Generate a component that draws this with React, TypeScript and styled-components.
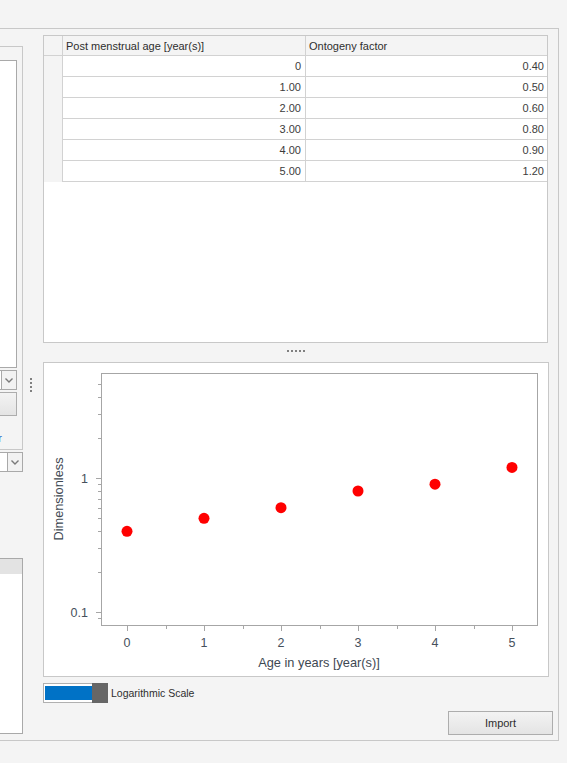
import React from 'react';
import styled, { createGlobalStyle } from 'styled-components';

const GlobalStyle = createGlobalStyle`
  html, body { margin: 0; padding: 0; background: #f4f4f4; }
  body { font-family: "Liberation Sans", Arial, sans-serif; font-size: 11px; color: #333; }
  * { box-sizing: border-box; }
`;

const Viewport = styled.div`
  width: 567px;
  height: 763px;
  overflow: hidden;
  padding-top: 28px;
  background: #f4f4f4;
`;

const Frame = styled.div`
  margin-left: -40px;
  width: 599px;
  height: 713px;
  border: 1px solid #c8c8c8;
  display: flex;
`;

/* ---------- left column ---------- */
const LeftColumn = styled.div`
  width: 62px;
  flex: none;
  display: flex;
  flex-direction: column;
  padding-top: 17px;
`;

const GroupPanel = styled.div`
  height: 404px;
  border: 1px solid #c8c8c8;
  padding: 13px 5px 0 0;
  display: flex;
  flex-direction: column;
  gap: 2px;
  overflow: hidden;
`;

const ListBox = styled.div`
  height: 308px;
  flex: none;
  background: #fff;
  border: 1px solid #a9a9a9;
`;

const Combo = styled.div<{ $top?: number }>`
  height: 20px;
  flex: none;
  margin-top: ${(p) => p.$top ?? 0}px;
  display: flex;
  background: #fff;
  border: 1px solid #a9a9a9;
`;

const ComboField = styled.div`
  flex: 1;
`;

const ArrowButton = styled.div`
  width: 15px;
  border-left: 1px solid #a9a9a9;
  background: #f2f2f2;
  display: flex;
  align-items: center;
  justify-content: center;
`;

const PlainButton = styled.button`
  height: 24px;
  flex: none;
  border: 1px solid #adadad;
  background: linear-gradient(#f3f3f3, #e4e4e4);
  font-family: "Liberation Sans", Arial, sans-serif;
  font-size: 11px;
  color: #222;
  padding: 0;
`;

const LinkText = styled.div`
  margin-top: 14px;
  padding-right: 15px;
  display: flex;
  justify-content: flex-end;
  overflow: hidden;
  white-space: nowrap;
  color: #1e64c8;
  font-size: 11px;
  line-height: 13px;
`;

const LeftGrid = styled.div`
  margin-top: 86px;
  height: 176px;
  border: 1px solid #a9a9a9;
  background: #fff;
`;

const LeftGridHeader = styled.div`
  height: 15px;
  background: #e3e3e3;
`;

/* ---------- splitters ---------- */
const VSplitter = styled.div`
  width: 20px;
  flex: none;
  display: flex;
  flex-direction: column;
  justify-content: center;
  gap: 2px;
  padding-left: 7px;
`;

const Dot = styled.span`
  display: block;
  width: 2px;
  height: 2px;
  background: #808080;
`;

const HSplitter = styled.div`
  width: 505px;
  height: 19px;
  flex: none;
  display: flex;
  justify-content: center;
  align-items: flex-start;
  padding-top: 7px;
  gap: 2px;
`;

/* ---------- right column ---------- */
const RightColumn = styled.div`
  flex: 1;
  display: flex;
  flex-direction: column;
  padding-top: 6px;
`;

const GridBox = styled.div`
  width: 505px;
  height: 308px;
  flex: none;
  border: 1px solid #c8c8c8;
  background: #fff;
`;

const GridRow = styled.div<{ $header?: boolean }>`
  display: grid;
  grid-template-columns: 19px 243px 1fr;
  height: ${(p) => (p.$header ? 20 : 21)}px;
`;

const IndicatorCell = styled.div<{ $header?: boolean }>`
  background: #f4f4f4;
  border-right: 1px solid #d2d2d2;
  border-bottom: ${(p) => (p.$header ? '1px solid #d2d2d2' : 'none')};
`;

const Cell = styled.div<{ $header?: boolean; $last?: boolean }>`
  display: flex;
  align-items: center;
  justify-content: ${(p) => (p.$header ? 'flex-start' : 'flex-end')};
  padding: ${(p) => (p.$header ? '0 0 0 3px' : p.$last ? '0 3px 0 0' : '0 4px 0 0')};
  background: ${(p) => (p.$header ? '#f4f4f4' : '#fff')};
  border-right: ${(p) => (p.$last ? 'none' : '1px solid #d2d2d2')};
  border-bottom: 1px solid #d2d2d2;
  color: ${(p) => (p.$header ? '#2e2e2e' : '#3c3c3c')};
  font-size: 11px;
  white-space: nowrap;
`;

const ChartPanel = styled.div`
  width: 506px;
  height: 315px;
  flex: none;
  border: 1px solid #c8c8c8;
  background: #fff;
  svg { display: block; }
`;

const ToggleRow = styled.div`
  margin-top: 6px;
  height: 20px;
  display: flex;
  align-items: center;
  gap: 3px;
`;

const Switch = styled.div`
  display: flex;
  height: 20px;
`;

const Track = styled.div`
  width: 49px;
  height: 20px;
  border: 1px solid #b0b0b0;
  border-right: none;
  background: #fff;
  padding: 2px 0 2px 1px;
  display: flex;
`;

const TrackFill = styled.div<{ $on: boolean }>`
  flex: 1;
  background: ${(p) => (p.$on ? '#0072c6' : '#fff')};
`;

const Thumb = styled.div`
  width: 16px;
  height: 20px;
  background: #666;
`;

const ToggleLabel = styled.span`
  font-size: 10.5px;
  color: #2e2e2e;
`;

const ImportButton = styled(PlainButton)`
  align-self: flex-end;
  margin-top: 8px;
  margin-right: 5px;
  width: 105px;
  font-size: 11px;
  color: #2e2e2e;
`;

/* ---------- data ---------- */
const rows: [string, string][] = [
  ['0', '0.40'],
  ['1.00', '0.50'],
  ['2.00', '0.60'],
  ['3.00', '0.80'],
  ['4.00', '0.90'],
  ['5.00', '1.20'],
];

const points = [
  [0, 0.4],
  [1, 0.5],
  [2, 0.6],
  [3, 0.8],
  [4, 0.9],
  [5, 1.2],
];

const X0 = 83;
const XS = 77;
const Y1 = 115;
const DEC = 134;
const xp = (v: number) => X0 + XS * v;
const yp = (v: number) => Y1 - DEC * Math.log10(v);

const Chevron = () => (
  <svg width="8" height="5" viewBox="0 0 8 5">
    <path d="M0.5 0.5 L4 4 L7.5 0.5" fill="none" stroke="#7a7a7a" strokeWidth="1.4" />
  </svg>
);

const Chart = () => {
  const axis = '#a6a6a6';
  const tickText = '#46505c';
  const minorY = [0.09, 0.2, 0.3, 0.4, 0.5, 0.6, 0.7, 0.8, 0.9, 2, 3, 4, 5];
  const majorY = [0.1, 1];
  const majorX = [0, 1, 2, 3, 4, 5];
  const minorX = [0.5, 1.5, 2.5, 3.5, 4.5];
  return (
    <svg width="504" height="313" viewBox="0 0 504 313">
      <rect x="57.5" y="10.5" width="436" height="252" fill="#fff" stroke={axis} strokeWidth="1" />
      {minorY.map((v) => {
        const y = Math.round(yp(v)) + 0.5;
        return <line key={'my' + v} x1="54" x2="57" y1={y} y2={y} stroke={axis} />;
      })}
      {majorY.map((v) => {
        const y = Math.round(yp(v)) + 0.5;
        return <line key={'My' + v} x1="52" x2="57" y1={y} y2={y} stroke={axis} />;
      })}
      {majorX.map((v) => {
        const x = Math.round(xp(v)) + 0.5;
        return <line key={'Mx' + v} x1={x} x2={x} y1="263" y2="268" stroke={axis} />;
      })}
      {minorX.map((v) => {
        const x = Math.round(xp(v)) + 0.5;
        return <line key={'mx' + v} x1={x} x2={x} y1="263" y2="266" stroke={axis} />;
      })}
      <g fontFamily='"Liberation Sans", Arial, sans-serif' fontSize="12.5" fill={tickText}>
        <text x="44" y={yp(1) + 4.5} textAnchor="end">1</text>
        <text x="44" y={yp(0.1) + 4.5} textAnchor="end">0.1</text>
        {majorX.map((v) => (
          <text key={'lx' + v} x={xp(v)} y="284" textAnchor="middle">
            {v}
          </text>
        ))}
      </g>
      <g fontFamily='"Liberation Sans", Arial, sans-serif' fontSize="12.8" fill="#3e4852">
        <text x="275" y="304" textAnchor="middle">Age in years [year(s)]</text>
        <text x="18.5" y="136" textAnchor="middle" transform="rotate(-90 18.5 136)">
          Dimensionless
        </text>
      </g>
      {points.map(([x, y]) => (
        <circle key={x} cx={xp(x)} cy={yp(y)} r="5.5" fill="#ff0000" />
      ))}
    </svg>
  );
};

export default function App() {
  return (
    <>
      <GlobalStyle />
      <Viewport>
        <Frame>
          <LeftColumn>
            <GroupPanel>
              <ListBox />
              <Combo>
                <ComboField />
                <ArrowButton>
                  <Chevron />
                </ArrowButton>
              </Combo>
              <PlainButton />
              <LinkText>Calculator</LinkText>
            </GroupPanel>
            <Combo $top={2}>
              <ComboField />
              <ArrowButton>
                <Chevron />
              </ArrowButton>
            </Combo>
            <LeftGrid>
              <LeftGridHeader />
            </LeftGrid>
          </LeftColumn>

          <VSplitter>
            <Dot />
            <Dot />
            <Dot />
            <Dot />
          </VSplitter>

          <RightColumn>
            <GridBox>
              <GridRow $header>
                <IndicatorCell $header />
                <Cell $header>Post menstrual age [year(s)]</Cell>
                <Cell $header $last>
                  Ontogeny factor
                </Cell>
              </GridRow>
              {rows.map(([a, b]) => (
                <GridRow key={a}>
                  <IndicatorCell />
                  <Cell>{a}</Cell>
                  <Cell $last>{b}</Cell>
                </GridRow>
              ))}
            </GridBox>
            <HSplitter>
              <Dot />
              <Dot />
              <Dot />
              <Dot />
              <Dot />
            </HSplitter>
            <ChartPanel>
              <Chart />
            </ChartPanel>
            <ToggleRow>
              <Switch>
                <Track>
                  <TrackFill $on />
                </Track>
                <Thumb />
              </Switch>
              <ToggleLabel>Logarithmic Scale</ToggleLabel>
            </ToggleRow>
            <ImportButton>Import</ImportButton>
          </RightColumn>
        </Frame>
      </Viewport>
    </>
  );
}
